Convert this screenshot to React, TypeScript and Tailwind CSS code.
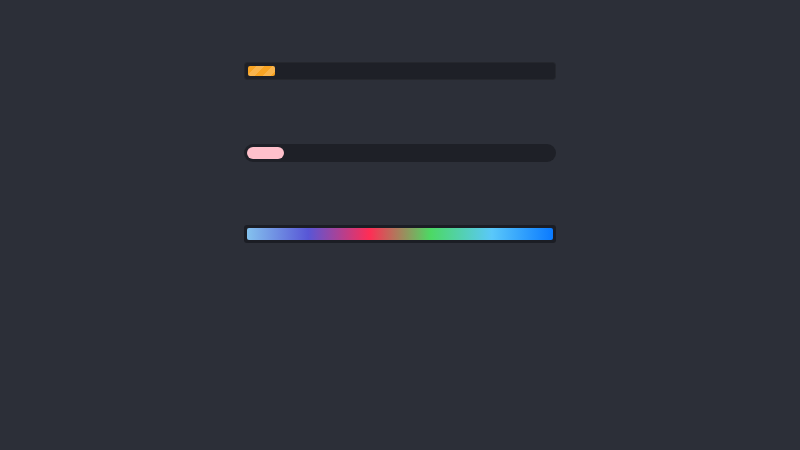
import React from 'react';

const stripes =
  'linear-gradient(-45deg, rgba(255,255,255,0.18) 25%, transparent 25%, transparent 50%, rgba(255,255,255,0.18) 50%, rgba(255,255,255,0.18) 75%, transparent 75%, transparent)';

export default function App() {
  return (
    <div className="min-h-screen w-full bg-[#2c2f38] flex flex-col items-center pt-[62px]">
      {/* striped progress */}
      <div className="w-[312px] h-[18px] p-[4px] rounded-[4px] bg-[#1e2027] shadow-[inset_0_0_0_1px_rgba(255,255,255,0.03)]">
        <div
          className="h-full w-[27px] rounded-[2px] bg-[#f8a424]"
          style={{ backgroundImage: stripes, backgroundSize: '16px 16px' }}
        />
      </div>

      {/* pill progress */}
      <div className="mt-[64px] w-[312px] h-[18px] p-[3px] rounded-full bg-[#1e2027]">
        <div className="h-full w-[37px] rounded-full bg-[#ffc0cb]" />
      </div>

      {/* rainbow progress */}
      <div className="mt-[63px] w-[312px] h-[18px] p-[3px] rounded-[3px] bg-[#1b1d24]">
        <div className="h-full w-full rounded-[2px] bg-[linear-gradient(to_right,#84c2ee_0%,#5856d6_20%,#ff2d55_40%,#4cd964_60%,#5ac8fa_80%,#0a7aff_100%)]" />
      </div>
    </div>
  );
}
